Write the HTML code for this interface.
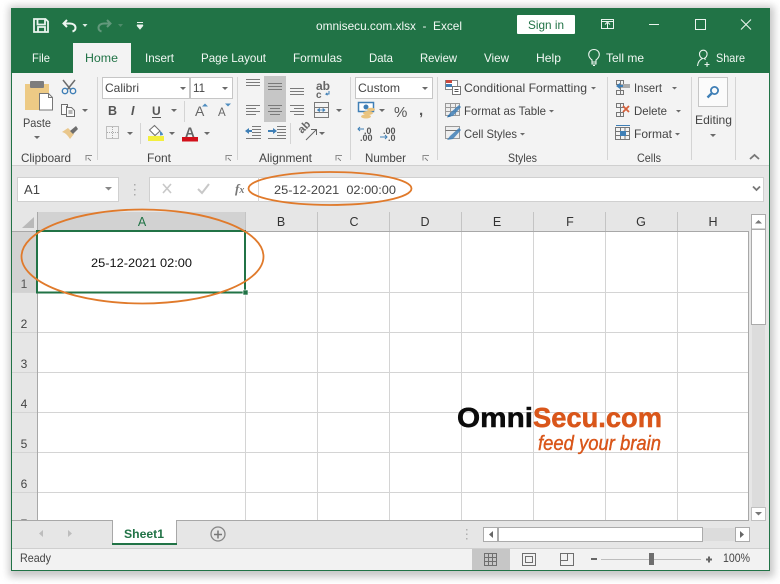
<!DOCTYPE html>
<html><head><meta charset="utf-8"><title>omnisecu.com.xlsx - Excel</title>
<style>
html,body{margin:0;padding:0;background:#fff;width:780px;height:584px;overflow:hidden}
svg{display:block}
text{font-family:"Liberation Sans",sans-serif;font-size:12px;fill:#444;white-space:pre}
.w text{fill:#f2f8f4}
.ar{fill:#6a6a6a}
</style></head><body>
<svg width="780" height="584" viewBox="0 0 780 584" xmlns="http://www.w3.org/2000/svg">
<defs>
<filter id="s" x="-5%" y="-5%" width="110%" height="110%"><feGaussianBlur stdDeviation="4"/></filter>
<clipPath id="grid"><rect x="12" y="231" width="736" height="289"/></clipPath>
</defs>
<rect x="9" y="6" width="765" height="571" fill="#999" opacity=".55" filter="url(#s)"/>
<rect x="11" y="8" width="759" height="563" fill="#217346"/>
<rect x="12" y="73" width="757" height="497" fill="#f3f3f3"/>

<!-- title bar -->
<g fill="none" stroke="#eaf4ee" stroke-width="1.800">
<path d="M34 19h11.500l2.500 2.500V32H34z"/><path d="M37.500 19.500v5h7.500v-5M38 32v-5h7v5"/>
</g>
<path d="M67 20l-3.500 3.500 3.500 3.500M64 23.500h6c3.200 0 5.500 1.800 5.500 4.200 0 1.800-1.200 3.200-3 3.800" fill="none" stroke="#eef6f1" stroke-width="2"/>
<path d="M82.500 24h5l-2.500 3z" fill="#dcebe2"/>
<path d="M107 20l3.500 3.500-3.500 3.500M110 23.500h-6c-3.200 0-5.500 1.800-5.500 4.200 0 1.800 1.200 3.200 3 3.800" fill="none" stroke="#63997c" stroke-width="2"/>
<path d="M118 24h5l-2.500 3z" fill="#4f8c6b"/>
<path d="M137 22.500h6M137 25h6M137.500 26l2.500 3 2.500-3z" fill="#e8f2ec" stroke="#e8f2ec" stroke-width="1"/>

<g class="w">
<text x="316" y="30" textLength="146" lengthAdjust="spacingAndGlyphs">omnisecu.com.xlsx  -  Excel</text>
<text x="32" y="62" textLength="18" lengthAdjust="spacingAndGlyphs">File</text>
<text x="145" y="62" textLength="29" lengthAdjust="spacingAndGlyphs">Insert</text>
<text x="201" y="62" textLength="65" lengthAdjust="spacingAndGlyphs">Page Layout</text>
<text x="293" y="62" textLength="49" lengthAdjust="spacingAndGlyphs">Formulas</text>
<text x="369" y="62" textLength="24" lengthAdjust="spacingAndGlyphs">Data</text>
<text x="420" y="62" textLength="37" lengthAdjust="spacingAndGlyphs">Review</text>
<text x="484" y="62" textLength="25" lengthAdjust="spacingAndGlyphs">View</text>
<text x="536" y="62" textLength="25" lengthAdjust="spacingAndGlyphs">Help</text>
<text x="606" y="62" textLength="38" lengthAdjust="spacingAndGlyphs">Tell me</text>
<text x="716" y="62" textLength="29" lengthAdjust="spacingAndGlyphs">Share</text>
</g>
<rect x="73" y="43" width="58" height="30" fill="#f3f3f3"/>
<text x="85" y="62" textLength="33" lengthAdjust="spacingAndGlyphs" style="fill:#217346">Home</text>
<rect x="517" y="15" width="58" height="19" rx="1" fill="#fff"/>
<text x="528" y="29" textLength="36" lengthAdjust="spacingAndGlyphs" style="fill:#217346">Sign in</text>
<!-- window controls -->
<g fill="none" stroke="#eaf4ee" stroke-width="1" shape-rendering="crispEdges">
<rect x="601.500" y="19.500" width="12" height="9"/><path d="M601.500 21.500h12M607.500 28v-5"/>
<path d="M649 24.500h10"/><rect x="695.500" y="19.500" width="10" height="10"/>
</g>
<path d="M741 19.500l10 10M751 19.500l-10 10" stroke="#eaf4ee" stroke-width="1.100" fill="none"/>
<path d="M605 24.500l2.500-2.500 2.500 2.500" fill="none" stroke="#eaf4ee"/>
<!-- tell me bulb -->
<path d="M592 62v-2c-2-1.500-3.300-3.300-3.300-5.500 0-3 2.400-5 5.300-5s5.300 2 5.300 5c0 2.200-1.300 4-3.300 5.500v2zM592 62v2h4v-2M593 65.500h2" fill="none" stroke="#eaf4ee" stroke-width="1.100"/>
<!-- share -->
<path d="M697.500 66c.5-4.500 2.500-6.500 5-7.500-2-1-3-2.800-3-4.500 0-2.200 1.700-3.800 3.800-3.800s3.800 1.600 3.800 3.800c0 1.800-1 3.500-3 4.500l1.600 1M707 62v5M704.500 64.500h5" fill="none" stroke="#eaf4ee" stroke-width="1.100"/>

<!-- ribbon separators -->
<g stroke="#d4d4d4" shape-rendering="crispEdges">
<path d="M97.500 77v83M237.500 77v83M350.500 77v83M437.500 77v83M607.500 77v83M691.500 77v83M735.500 77v83"/>
<path d="M184.500 101v21M140.500 123v21M290.500 123v21"/>
</g>
<path d="M12 165.500h757" stroke="#cfcfcf" shape-rendering="crispEdges"/>

<!-- clipboard -->
<rect x="25" y="84" width="24" height="26" fill="#edca85"/>
<rect x="30" y="81" width="14" height="7" rx="1" fill="#7d7d7d"/>
<path d="M39.500 93.500h9l4 4v12.500h-13z" fill="#fff" stroke="#777"/>
<path d="M48.500 93.500v4h4" fill="none" stroke="#777"/>
<text x="23" y="127" textLength="28" lengthAdjust="spacingAndGlyphs">Paste</text>
<path d="M34 136h6l-3 3z" class="ar"/>
<path d="M63 80l8 10M75 80l-8 10" stroke="#6c6c6c" stroke-width="1.500" fill="none"/>
<circle cx="65" cy="91" r="2.700" fill="none" stroke="#3f7fb6" stroke-width="1.400"/><circle cx="73" cy="91" r="2.700" fill="none" stroke="#3f7fb6" stroke-width="1.400"/>
<path d="M61.500 104.500h6v2h-1v8h-5zM66.500 107.500h5l3 3v6h-8z" fill="#fafafa" stroke="#6e6e6e"/>
<path d="M68.500 111h4M68.500 113h4" stroke="#6e6e6e"/>
<path d="M82 109h6l-3 3z" class="ar"/>
<path d="M62 132l6-4 6 6-4 5c-2-3-4-6-8-7z" fill="#e9c78c"/>
<path d="M70 131l6-5 2 3-5 5z" fill="#6d6d6d"/>
<text x="21" y="162" textLength="50" lengthAdjust="spacingAndGlyphs">Clipboard</text>
<g fill="none" stroke="#8a8a8a" shape-rendering="crispEdges"><path d="M92 155.500h-6v5M91 161l-3-3M232 155.500h-6v5M231 161l-3-3M342 155.500h-6v5M341 161l-3-3M429 155.500h-6v5M428 161l-3-3"/></g>
<path d="M750 159l4.500-4 4.500 4" fill="none" stroke="#777" stroke-width="1.800"/>

<!-- font -->
<rect x="102.500" y="77.500" width="87" height="21" fill="#fff" stroke="#c6c6c6" shape-rendering="crispEdges"/>
<rect x="190.500" y="77.500" width="42" height="21" fill="#fff" stroke="#c6c6c6" shape-rendering="crispEdges"/>
<text x="105" y="92" textLength="34" lengthAdjust="spacingAndGlyphs">Calibri</text>
<text x="193" y="92" textLength="12" lengthAdjust="spacingAndGlyphs">11</text>
<path d="M180 87h6l-3 3zM222 87h6l-3 3z" class="ar"/>
<text x="108" y="115" style="font-weight:bold;font-size:12.500px;fill:#555">B</text>
<text x="131" y="115" style="font-style:italic;font-weight:bold;font-size:12.500px;fill:#555">I</text>
<text x="152" y="115" style="font-weight:bold;font-size:12px;fill:#555">U</text>
<path d="M152 117.500h9" stroke="#555"/>
<path d="M171 109h6l-3 3z" class="ar"/>
<text x="195" y="116" style="font-size:14px;fill:#666">A</text><path d="M202 106.500l3-3 3 3z" fill="#4f8dc0"/>
<text x="218" y="116" style="font-size:11.500px;fill:#666">A</text><path d="M225 103.500h6l-3 3z" fill="#4f8dc0"/>
<rect x="106.500" y="126.500" width="12" height="12" fill="none" stroke="#8a8a8a" stroke-dasharray="1 1"/>
<path d="M112.500 127v11M107 132.500h11" stroke="#aaa" stroke-dasharray="1 1"/>
<path d="M127 132h6l-3 3z" class="ar"/>
<path d="M149.500 130l5-4.500 5.500 5.500-5 4.500z" fill="#fff" stroke="#707070"/>
<path d="M160 131c2 1 3 2.500 3 4l-3 .5z" fill="#4f8dc0"/>
<rect x="148" y="136" width="16" height="5" fill="#f3ef3e"/>
<path d="M169 132h6l-3 3z" class="ar"/>
<text x="185" y="137" style="font-size:13.500px;font-weight:bold;fill:#666">A</text>
<rect x="182" y="137" width="16" height="4.500" fill="#d2101a"/>
<path d="M204 132h6l-3 3z" class="ar"/>
<text x="147" y="162" textLength="24" lengthAdjust="spacingAndGlyphs">Font</text>

<!-- alignment -->
<rect x="264" y="76" width="22" height="46" fill="#c6c6c6"/>
<g stroke="#7a7a7a" shape-rendering="crispEdges" fill="none">
<path d="M246 79.500h14M246 82.500h14M246 85.500h14"/>
<path d="M268 83.500h14M268 86.500h14M268 89.500h14"/>
<path d="M290 88.500h14M290 91.500h14M290 94.500h14"/>
<path d="M246 105.500h14M246 108.500h10M246 111.500h14M246 114.500h10"/>
<path d="M268 105.500h14M270 108.500h10M268 111.500h14M270 114.500h10"/>
<path d="M290 105.500h14M294 108.500h10M290 111.500h14M294 114.500h10"/>
<path d="M252 126.500h9M252 129.500h9M252 132.500h9M252 135.500h9M246 138.500h15"/>
<path d="M277 126.500h9M277 129.500h9M277 132.500h9M277 135.500h9M268 138.500h18"/>
<rect x="314.500" y="102.500" width="14" height="15"/>
<path d="M314.500 107.500h14M314.500 112.500h14"/>
</g>
<path d="M245 131l4-3v6z" fill="#3f7fb6"/><path d="M248 130h4v2h-4z" fill="#3f7fb6"/>
<path d="M277 131l-4-3v6z" fill="#3f7fb6"/><path d="M268 130h6v2h-6z" fill="#3f7fb6"/>
<path d="M317 110h8M317.500 110l2-1.500v3zM325 110l-2-1.500v3z" stroke="#3f7fb6" fill="#3f7fb6" stroke-width=".7"/>
<text x="316" y="90" style="font-size:12px;font-weight:bold;fill:#666">ab</text>
<text x="316" y="98" style="font-size:10px;font-weight:bold;fill:#666">c</text>
<path d="M329 91v3h-3l1.200-1.200M326 94l1.500 1.300" stroke="#3f7fb6" fill="none"/>
<path d="M336 109h6l-3 3z" class="ar"/>
<text x="0" y="0" transform="translate(302 134) rotate(-45)" style="font-size:11px;fill:#666;font-weight:bold">ab</text>
<path d="M306 140l10-10M311 129.500h5.500v5.500" stroke="#666" fill="none"/>
<path d="M319 132h6l-3 3z" class="ar"/>
<text x="259" y="162" textLength="53" lengthAdjust="spacingAndGlyphs">Alignment</text>

<!-- number -->
<rect x="355.500" y="77.500" width="77" height="21" fill="#fff" stroke="#c6c6c6" shape-rendering="crispEdges"/>
<text x="358" y="92" textLength="42" lengthAdjust="spacingAndGlyphs">Custom</text>
<path d="M422 87h6l-3 3z" class="ar"/>
<rect x="358.500" y="102.500" width="15" height="9" fill="#fff" stroke="#3f7fb6" stroke-width="1.500"/>
<ellipse cx="366" cy="107" rx="2.500" ry="2.500" fill="#3f7fb6"/>
<ellipse cx="368" cy="113" rx="5" ry="2" fill="#eac47f"/><ellipse cx="366" cy="116.500" rx="5" ry="2" fill="#eac47f"/><ellipse cx="371" cy="109.500" rx="4" ry="1.800" fill="#eac47f"/>
<path d="M379 109h6l-3 3z" class="ar"/>
<text x="394" y="117" style="font-size:15px;fill:#555">%</text>
<text x="419" y="115" style="font-size:15px;font-weight:bold;fill:#555">,</text>
<text x="364" y="134" style="font-size:9px;font-weight:bold;fill:#555">.0</text>
<text x="360" y="141" style="font-size:9px;font-weight:bold;fill:#555">.00</text>
<path d="M358 129h6M360 127l-2 2 2 2" stroke="#3f7fb6" fill="none"/>
<text x="383" y="134" style="font-size:9px;font-weight:bold;fill:#555">.00</text>
<text x="388" y="141" style="font-size:9px;font-weight:bold;fill:#555">.0</text>
<path d="M380 137h7M385 135l2 2-2 2" stroke="#3f7fb6" fill="none"/>
<text x="365" y="162" textLength="41" lengthAdjust="spacingAndGlyphs">Number</text>

<!-- styles -->
<rect x="445.500" y="80.500" width="12" height="9" fill="#fff" stroke="#888"/>
<rect x="446" y="80" width="6" height="3" fill="#c9483f"/><rect x="446" y="84" width="6" height="3" fill="#3f7fb6"/>
<rect x="452.500" y="86.500" width="8" height="8" fill="#fff" stroke="#777"/>
<path d="M454.500 89.500h4M454.500 91.500h4" stroke="#555"/>
<text x="464" y="92" textLength="123" lengthAdjust="spacingAndGlyphs">Conditional Formatting</text>
<path d="M591 87h5l-2.500 2.500z" class="ar"/>
<g fill="none" stroke="#999" shape-rendering="crispEdges"><rect x="445.500" y="103.500" width="14" height="12" fill="#eee"/><path d="M450.500 103.500v12M455.500 103.500v12M445.500 107.500h14M445.500 111.500h14"/></g>
<path d="M447 117l3-4 9-8 2 2-8 9z" fill="#3f7fb6" opacity=".85"/><path d="M447 117.500l2-3 2 2z" fill="#2f6fa8"/>
<text x="464" y="115" textLength="82" lengthAdjust="spacingAndGlyphs">Format as Table</text>
<path d="M549 110h5l-2.500 2.500z" class="ar"/>
<g fill="none" stroke="#999" shape-rendering="crispEdges"><rect x="445.500" y="126.500" width="14" height="12" fill="#eee"/><path d="M445.500 130.500h14" stroke="#777"/></g>
<path d="M447 140l3-4 9-8 2 2-8 9z" fill="#3f7fb6" opacity=".85"/>
<text x="464" y="138" textLength="53" lengthAdjust="spacingAndGlyphs">Cell Styles</text>
<path d="M520 133h5l-2.500 2.500z" class="ar"/>
<text x="508" y="162" textLength="29" lengthAdjust="spacingAndGlyphs">Styles</text>

<!-- cells -->
<g fill="none" stroke="#777" shape-rendering="crispEdges">
<path d="M616.500 80.500h7v4h-7zM616.500 90.500h7v4h-7zM620.500 80.500v14"/>
<path d="M616.500 103.500h7v4h-7zM616.500 112.500h7v4h-7zM620.500 103.500v13"/>
<rect x="615.500" y="127.500" width="14" height="12"/><path d="M620.500 127.500v12M625 127.500v12M615.500 131.500h14M615.500 135.500h14"/>
</g>
<rect x="621" y="84" width="9" height="4" fill="#aaa"/>
<path d="M616 86l4-3v6zM619 85h4v2h-4z" fill="#3f7fb6"/>
<path d="M623 106l6 6M629 106l-6 6" stroke="#d6603a" stroke-width="1.800"/>
<path d="M616 125.500h14" stroke="#3f7fb6"/><rect x="620" y="131" width="6" height="5" fill="#3f7fb6"/>
<text x="634" y="92" textLength="28" lengthAdjust="spacingAndGlyphs">Insert</text>
<text x="634" y="115" textLength="33" lengthAdjust="spacingAndGlyphs">Delete</text>
<text x="634" y="138" textLength="38" lengthAdjust="spacingAndGlyphs">Format</text>
<path d="M672 87h5l-2.500 2.500zM676 110h5l-2.500 2.500zM675 133h5l-2.500 2.500z" class="ar"/>
<text x="637" y="162" textLength="24" lengthAdjust="spacingAndGlyphs">Cells</text>

<!-- editing -->
<rect x="698.500" y="77.500" width="29" height="29" fill="#fbfbfb" stroke="#c6c6c6" shape-rendering="crispEdges"/>
<circle cx="714.500" cy="90.500" r="3.600" fill="none" stroke="#3f7fb6" stroke-width="1.800"/>
<path d="M711.500 93.500l-4 4" stroke="#3f7fb6" stroke-width="2.400"/>
<text x="695" y="124" textLength="37" lengthAdjust="spacingAndGlyphs">Editing</text>
<path d="M710 134h6l-3 3z" class="ar"/>

<!-- formula bar -->
<rect x="12" y="166" width="757" height="46" fill="#e6e6e6"/>
<rect x="17.500" y="177.500" width="101" height="24" fill="#fff" stroke="#d0d0d0" shape-rendering="crispEdges"/>
<text x="24" y="194" textLength="16" lengthAdjust="spacingAndGlyphs" style="font-size:12.500px">A1</text>
<path d="M105 187h7l-3.500 3.500z" fill="#888"/>
<path d="M134 184h1.500v1.500H134zM134 189h1.500v1.500H134zM134 194h1.500v1.500H134z" fill="#aaa"/>
<rect x="149.500" y="177.500" width="614" height="24" fill="#fff" stroke="#d0d0d0" shape-rendering="crispEdges"/>
<path d="M258.500 177v25" stroke="#d8d8d8" shape-rendering="crispEdges"/>
<path d="M163 184l8 9M171 184l-8 9" stroke="#c8c8c8" stroke-width="1.600"/>
<path d="M198 189l4 4 7-9" stroke="#c8c8c8" stroke-width="2" fill="none"/>
<text x="235" y="193" style="font-family:'Liberation Serif',serif;font-style:italic;font-weight:bold;font-size:13px;fill:#777">f<tspan style="font-size:10px">x</tspan></text>
<text x="274" y="194" textLength="122" lengthAdjust="spacingAndGlyphs">25-12-2021  02:00:00</text>
<path d="M753 186.500l3.500 3.500 3.500-3.500" stroke="#777" stroke-width="1.800" fill="none"/>

<!-- sheet -->
<rect x="12" y="212" width="757" height="336" fill="#e6e6e6"/>
<rect x="37" y="231" width="711" height="289" fill="#fff"/>
<rect x="37" y="212" width="208" height="19" fill="#d2d2d2"/>
<rect x="12" y="231" width="25" height="61" fill="#d2d2d2"/>
<path d="M22 228l12-11v11z" fill="#b9b9b9"/>
<g stroke="#d4d4d4" shape-rendering="crispEdges" fill="none">
<path d="M245.500 231v289M317.500 231v289M389.500 231v289M461.500 231v289M533.500 231v289M605.500 231v289M677.500 231v289"/>
<path d="M12 292.500h736M12 332.500h736M12 372.500h736M12 412.500h736M12 452.500h736M12 492.500h736"/>
<path d="M245.500 212v19M317.500 212v19M389.500 212v19M461.500 212v19M533.500 212v19M605.500 212v19M677.500 212v19" stroke="#c4c4c4"/>
</g>
<g stroke="#a8a8a8" shape-rendering="crispEdges" fill="none">
<path d="M37.500 212v308M37 231.500h711M12 231.500h25M748.500 231v289M12 520.500h737"/>
</g>
<g text-anchor="middle" style="font-size:12px">
<text x="142" y="226" style="fill:#217346;font-size:12.500px">A</text>
<text x="281" y="226" style="fill:#333;font-size:12.500px">B</text>
<text x="354" y="226" style="fill:#333;font-size:12.500px">C</text>
<text x="425" y="226" style="fill:#333;font-size:12.500px">D</text>
<text x="497" y="226" style="fill:#333;font-size:12.500px">E</text>
<text x="570" y="226" style="fill:#333;font-size:12.500px">F</text>
<text x="641" y="226" style="fill:#333;font-size:12.500px">G</text>
<text x="713" y="226" style="fill:#333;font-size:12.500px">H</text>
</g>
<g clip-path="url(#grid)" text-anchor="middle">
<text x="24" y="288" style="fill:#555">1</text>
<text x="24" y="328">2</text>
<text x="24" y="368">3</text>
<text x="24" y="408">4</text>
<text x="24" y="448">5</text>
<text x="24" y="488">6</text>
<text x="24" y="528">7</text>
</g>
<rect x="37" y="231" width="208" height="61.500" fill="#fff" stroke="#217346" stroke-width="2"/>
<rect x="243" y="290" width="5" height="5" fill="#217346" stroke="#fff" stroke-width=".6"/>
<text x="91" y="267" textLength="101" lengthAdjust="spacingAndGlyphs" style="fill:#111">25-12-2021 02:00</text>

<!-- logo -->
<text x="457" y="427" textLength="76" lengthAdjust="spacingAndGlyphs" style="font-size:28px;font-weight:bold;fill:#0b0b0b;stroke:#0b0b0b;stroke-width:.5">Omni</text>
<text x="533" y="427" textLength="129" lengthAdjust="spacingAndGlyphs" style="font-size:28px;font-weight:bold;fill:#d9561a;stroke:#d9561a;stroke-width:.5">Secu.com</text>
<text x="538" y="450" textLength="123" lengthAdjust="spacingAndGlyphs" style="font-size:20px;font-style:italic;fill:#d9561a;stroke:#d9561a;stroke-width:.4">feed your brain</text>

<!-- vertical scrollbar -->
<rect x="751.500" y="214.500" width="14" height="14.500" fill="#fff" stroke="#ababab" shape-rendering="crispEdges"/>
<path d="M755 223.500l3.500-3.500 3.500 3.500z" fill="#777"/>
<rect x="751.500" y="229.500" width="14" height="95" fill="#fff" stroke="#ababab" shape-rendering="crispEdges"/>
<rect x="752" y="325" width="13" height="182" fill="#dcdcdc"/>
<rect x="751.500" y="507.500" width="14" height="13" fill="#fff" stroke="#c0c0c0" shape-rendering="crispEdges"/>
<path d="M755 512h7l-3.500 3.500z" fill="#777"/>

<!-- tabs -->
<rect x="12" y="521" width="757" height="27" fill="#e6e6e6"/>
<path d="M12 520.500h100M176 520.500h573" stroke="#a8a8a8" shape-rendering="crispEdges"/>
<path d="M112.500 520v24M176.500 520v24" stroke="#a8a8a8" shape-rendering="crispEdges"/>
<rect x="113" y="520" width="63" height="23" fill="#fff"/>
<rect x="112" y="543" width="65" height="2" fill="#217346"/>
<text x="124" y="538" textLength="40" lengthAdjust="spacingAndGlyphs" style="font-weight:bold;fill:#217346">Sheet1</text>
<path d="M43 530v7l-4-3.500zM68 530v7l4-3.500z" fill="#bdbdbd"/>
<circle cx="218" cy="534" r="7" fill="none" stroke="#858585" stroke-width="1.300"/>
<path d="M214 534.500h8M218 530.500v8" stroke="#777" stroke-width="1.500"/>
<path d="M466 529h1.500v1.500H466zM466 533.500h1.500v1.500H466zM466 538h1.500v1.500H466z" fill="#b0b0b0"/>
<rect x="483.500" y="527.500" width="14" height="14" fill="#fff" stroke="#ababab" shape-rendering="crispEdges"/>
<path d="M493 531v7l-4-3.500z" fill="#666"/>
<rect x="498.500" y="527.500" width="204" height="14" fill="#fff" stroke="#ababab" shape-rendering="crispEdges"/>
<rect x="703" y="528" width="32" height="13" fill="#dcdcdc"/>
<rect x="735.500" y="527.500" width="14" height="14" fill="#fff" stroke="#ababab" shape-rendering="crispEdges"/>
<path d="M740 531v7l4-3.500z" fill="#666"/>

<!-- status bar -->
<rect x="12" y="549" width="757" height="21" fill="#f2f2f2"/>
<path d="M12 548.500h757" stroke="#cfcfcf" shape-rendering="crispEdges"/>
<text x="20" y="562" textLength="31" lengthAdjust="spacingAndGlyphs">Ready</text>
<rect x="472" y="549" width="38" height="21" fill="#c6c6c6"/>
<g fill="none" stroke="#6e6e6e" shape-rendering="crispEdges">
<rect x="484.500" y="553.500" width="12" height="12"/><path d="M488.500 553.500v12M492.500 553.500v12M484.500 557.500h12M484.500 561.500h12"/>
<rect x="522.500" y="553.500" width="13" height="12"/><rect x="525.500" y="556.500" width="7" height="6"/>
<rect x="560.500" y="553.500" width="13" height="12"/><path d="M560.500 560.500h7v-7"/>
</g>
<path d="M591 558h6v2h-6zM706 558.500h6v2h-6zM708 556.500h2v6h-2z" fill="#666"/>
<path d="M601 559.500h100" stroke="#bdbdbd" shape-rendering="crispEdges"/>
<rect x="649" y="553" width="5" height="12" fill="#6e6e6e"/>
<text x="723" y="562" textLength="27" lengthAdjust="spacingAndGlyphs">100%</text>

<!-- annotations -->
<ellipse cx="330" cy="188.500" rx="81.500" ry="16.500" fill="none" stroke="#e07a2b" stroke-width="1.800"/>
<ellipse cx="142.500" cy="256.500" rx="121" ry="47" fill="none" stroke="#e07a2b" stroke-width="1.800"/>
</svg>
</body></html>
